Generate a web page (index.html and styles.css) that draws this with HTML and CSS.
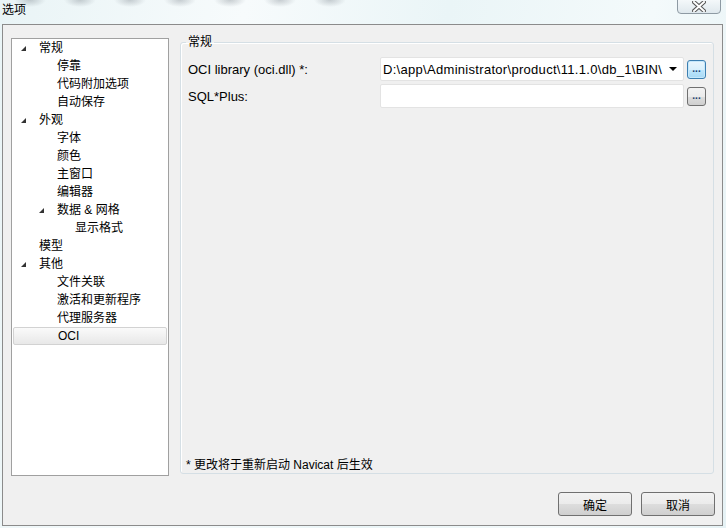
FILE: index.html
```html
<!DOCTYPE html>
<html lang="zh-CN">
<head>
    <meta charset="UTF-8">
    <title>选项</title>
    <link rel="stylesheet" href="styles.css">
</head>
<body>
    <!-- Titelbalk -->
    <div class="titlebar">
        <span class="title">选项</span>
        <div class="close-btn">
            <svg width="14" height="11" viewBox="0 0 14 11">
                <path d="M2 1 L12 10 M12 1 L2 10" stroke="#555" stroke-width="4" stroke-linecap="square"/>
                <path d="M2 1 L12 10 M12 1 L2 10" stroke="#fff" stroke-width="2" stroke-linecap="square"/>
            </svg>
        </div>
    </div>

    <div class="frame">
        <div class="main">
            <!-- Boomstructuur -->
            <div class="tree">
                <div class="node lvl0"><span class="arrow"></span>常规</div>
                <div class="node lvl1">停靠</div>
                <div class="node lvl1">代码附加选项</div>
                <div class="node lvl1">自动保存</div>
                <div class="node lvl0"><span class="arrow"></span>外观</div>
                <div class="node lvl1">字体</div>
                <div class="node lvl1">颜色</div>
                <div class="node lvl1">主窗口</div>
                <div class="node lvl1">编辑器</div>
                <div class="node lvl1"><span class="arrow"></span>数据 &amp; 网格</div>
                <div class="node lvl2">显示格式</div>
                <div class="node lvl0">模型</div>
                <div class="node lvl0"><span class="arrow"></span>其他</div>
                <div class="node lvl1">文件关联</div>
                <div class="node lvl1">激活和更新程序</div>
                <div class="node lvl1">代理服务器</div>
                <div class="node lvl1 selected">OCI</div>
            </div>

            <!-- Groepsvak -->
            <fieldset class="group">
                <legend>常规</legend>
                <div class="group-body">
                    <div class="form">
                        <label class="latin">OCI library (oci.dll) *:</label>
                        <div class="combo">
                            <span class="combo-text">D:\app\Administrator\product\11.1.0\db_1\BIN\</span>
                            <span class="combo-arrow"></span>
                        </div>
                        <button class="dots active">...</button>

                        <label class="latin">SQL*Plus:</label>
                        <div class="field"></div>
                        <button class="dots">...</button>
                    </div>
                    <div class="note">* 更改将于重新启动 Navicat 后生效</div>
                </div>
            </fieldset>
        </div>

        <div class="actions">
            <button class="btn">确定</button>
            <button class="btn">取消</button>
        </div>
    </div>
</body>
</html>
```

FILE: styles.css
```css
/* Algemeen */
* {
    box-sizing: border-box;
}

body {
    margin: 0;
    width: 726px;
    height: 528px;
    overflow: hidden;
    font-family: "Liberation Sans", "Noto Sans CJK SC", sans-serif;
    font-size: 12px;
    color: #000;
    background:
        radial-gradient(ellipse 16px 7px at 30px 0, rgba(90, 100, 110, 0.3), transparent),
        radial-gradient(ellipse 16px 7px at 80px 0, rgba(90, 100, 110, 0.3), transparent),
        radial-gradient(ellipse 16px 7px at 130px 0, rgba(90, 100, 110, 0.3), transparent),
        radial-gradient(ellipse 16px 7px at 180px 0, rgba(90, 100, 110, 0.3), transparent),
        radial-gradient(ellipse 16px 7px at 230px 0, rgba(90, 100, 110, 0.3), transparent),
        radial-gradient(ellipse 16px 7px at 280px 0, rgba(90, 100, 110, 0.3), transparent),
        radial-gradient(ellipse 16px 7px at 330px 0, rgba(90, 100, 110, 0.3), transparent),
        linear-gradient(100deg, #e9f4f6 0%, #f7fbfc 30%, #eaf5f7 55%, #f4fafb 80%, #e6f2f5 100%);
}

/* Titelbalk */
.titlebar {
    height: 24px;
    display: flex;
    justify-content: space-between;
    align-items: flex-start;
    padding: 0 5px 0 2px;
}

.title {
    line-height: 20px;
    font-size: 12px;
}

.close-btn {
    width: 44px;
    height: 15px;
    margin-top: -1px;
    border: 1px solid #8e9aa3;
    border-radius: 0 0 4px 4px;
    background: linear-gradient(#f4f8fa, #dfe8ed);
    display: flex;
    justify-content: center;
    align-items: center;
}

/* Venster */
.frame {
    margin: 0 3px 0 2px;
    height: 502px;
    border: 1px solid #8b8b8b;
    background: #f0f0f0;
    padding: 13px 7px 0 8px;
}

.main {
    display: flex;
    height: 438px;
}

/* Boom */
.tree {
    width: 158px;
    height: 438px;
    border: 1px solid #a0a0a0;
    background: #fff;
    flex-shrink: 0;
}

.node {
    position: relative;
    height: 18px;
    line-height: 18px;
    white-space: nowrap;
}

.lvl0 { padding-left: 27px; }
.lvl1 { padding-left: 45px; }
.lvl2 { padding-left: 63px; }

.arrow {
    position: absolute;
    top: 7px;
    width: 0;
    height: 0;
    border-left: 5px solid transparent;
    border-bottom: 5px solid #333;
}

.lvl0 .arrow { left: 9px; }
.lvl1 .arrow { left: 27px; }

.selected {
    margin: 0 1px;
    padding-left: 44px;
    border: 1px solid #d2d2d2;
    border-radius: 2px;
    line-height: 16px;
    background: linear-gradient(#fafafa, #e8e8e8);
}

/* Groepsvak */
.group {
    margin: -4px 0 0 11px;
    padding: 0 7px 0 6px;
    width: 534px;
    height: 440px;
    border: 1px solid #d5dfe5;
    border-radius: 3px;
    box-shadow: inset 1px 1px 0 #fff;
    min-width: 0;
}

.group legend {
    margin-left: -1px;
    padding: 0 2px;
    line-height: 16px;
}

.group-body {
    height: 423px;
    display: flex;
    flex-direction: column;
}

.form {
    display: grid;
    grid-template-columns: 189px 304px 19px;
    grid-auto-rows: 24px;
    column-gap: 3px;
    row-gap: 3px;
    align-items: center;
    margin-top: 7px;
    margin-left: 1px;
}

.latin {
    font-size: 13px;
}

.combo,
.field {
    height: 24px;
    border: 1px solid #e3e3e3;
    border-radius: 2px;
    background: #fff;
}

.combo {
    display: flex;
    align-items: center;
    padding-left: 2px;
    overflow: hidden;
}

.combo-text {
    flex: 1;
    overflow: hidden;
    white-space: nowrap;
    font-size: 13px;
    letter-spacing: 0.3px;
}

.combo-arrow {
    width: 0;
    height: 0;
    margin: 0 6px 0 4px;
    border-left: 4px solid transparent;
    border-right: 4px solid transparent;
    border-top: 4px solid #000;
}

.dots {
    width: 19px;
    height: 19px;
    padding: 0;
    border: 1px solid #707070;
    border-radius: 3px;
    background: linear-gradient(#f2f2f2 0%, #ebebeb 50%, #dddddd 51%, #cfcfcf 100%);
    font-family: "Liberation Sans", sans-serif;
    font-size: 10px;
    line-height: 10px;
    color: #1a3d6e;
    font-weight: bold;
}

.dots.active {
    border: 1px solid #3c7fb1;
    background: linear-gradient(#eaf6fd 0%, #d9f0fc 50%, #bee6fd 51%, #a7d9f5 100%);
    box-shadow: inset 0 0 0 1px #c6e8fb;
}

.note {
    margin-top: auto;
    margin-left: -1px;
    line-height: 16px;
}

/* Knoppen */
.actions {
    display: flex;
    justify-content: flex-end;
    gap: 9px;
    margin-top: 16px;
}

.btn {
    width: 74px;
    height: 24px;
    border: 1px solid #707070;
    border-radius: 3px;
    background: linear-gradient(#f2f2f2 0%, #ebebeb 50%, #dddddd 51%, #cfcfcf 100%);
    font-family: "Noto Sans CJK SC", sans-serif;
    font-size: 12px;
    color: #000;
}
```
